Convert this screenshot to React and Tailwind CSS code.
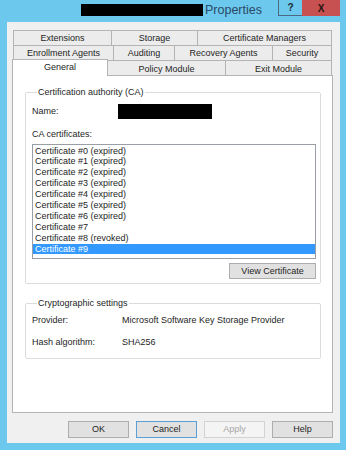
const tabRow1 = [
    { label: 'Extensions', w: 'w-[98px]' },
    { label: 'Storage', w: 'w-[86px]' },
    { label: 'Certificate Managers', w: 'flex-1' },
];

const tabRow2 = [
    { label: 'Enrollment Agents', w: 'w-[100px]' },
    { label: 'Auditing', w: 'w-[61px]' },
    { label: 'Recovery Agents', w: 'w-[98px]' },
    { label: 'Security', w: 'flex-1' },
];

const certificates = [
    'Certificate #0 (expired)',
    'Certificate #1 (expired)',
    'Certificate #2 (expired)',
    'Certificate #3 (expired)',
    'Certificate #4 (expired)',
    'Certificate #5 (expired)',
    'Certificate #6 (expired)',
    'Certificate #7',
    'Certificate #8 (revoked)',
    'Certificate #9',
];

const Tab = ({ label, w, last }) => (
    <div
        className={`${w} h-[15px] flex items-center justify-center bg-[#ececec] border-t border-l border-[#b4b4b4] ${last ? 'border-r' : ''}`}
    >
        {label}
    </div>
);

const Button = ({ children, variant }) => {
    // Cancel tiene el foco, Apply deshabilitado
    let style = 'bg-[#e1e1e1] border-[#adadad] text-[#1e1e1e]';
    if (variant === 'focus') style = 'bg-[#e1e1e1] border-[#5c9fd4] text-[#1e1e1e]';
    if (variant === 'disabled') style = 'bg-[#f4f4f4] border-[#d3d3d3] text-[#a6a6a6]';
    return (
        <div className={`w-[61px] h-[17px] flex items-center justify-center border ${style}`}>
            {children}
        </div>
    );
};

export default function App() {
    return (
        <div className="w-[346px] h-[450px] bg-[#6cc8ec] flex flex-col font-['Liberation_Sans',Arial,sans-serif] text-[9px] leading-[11px] text-[#1e1e1e]">
            {/* Barra de título */}
            <div className="h-[22px] flex items-start shrink-0">
                <div className="ml-[81px] mt-[4px] w-[122px] h-[12px] bg-black" />
                <span className="ml-[2px] text-[12.5px] leading-[20px] text-[#2a4868]">Properties</span>
                <div className="ml-auto mr-[6px] flex">
                    <div className="w-[24px] h-[16px] border-l border-b border-[#4a6a80] flex items-center justify-center text-[10px] font-bold text-[#1e2a33]">
                        ?
                    </div>
                    <div className="w-[38px] h-[16px] bg-[#c75050] flex items-center justify-center text-[10px] font-bold text-[#2a1414]">
                        X
                    </div>
                </div>
            </div>

            {/* Área de contenido */}
            <div className="flex-1 ml-[7px] mr-[6px] mb-[7px] bg-[#f0f0f0] flex flex-col pt-[8px] pl-[5px] pr-[7px]">
                <div className="px-[1px]">
                    <div className="flex">
                        {tabRow1.map((t, i) => (
                            <Tab key={t.label} {...t} last={i === tabRow1.length - 1} />
                        ))}
                    </div>
                    <div className="flex">
                        {tabRow2.map((t, i) => (
                            <Tab key={t.label} {...t} last={i === tabRow2.length - 1} />
                        ))}
                    </div>
                </div>
                <div className="flex items-end h-[15px]">
                    <div className="relative z-10 w-[96px] h-[17px] -mb-px bg-white border-t border-l border-r border-[#b4b4b4] flex justify-center pt-[2px]">
                        General
                    </div>
                    <div className="w-[117px] h-[15px] flex items-center justify-center bg-[#ececec] border-t border-[#b4b4b4] pt-[2px]">
                        Policy Module
                    </div>
                    <div className="w-[107px] h-[15px] flex items-center justify-center bg-[#ececec] border-t border-l border-r border-[#b4b4b4] pt-[2px]">
                        Exit Module
                    </div>
                </div>

                {/* Panel de la pestaña General */}
                <div className="h-[338px] bg-white border border-[#b4b4b4] flex flex-col pt-[11px] pl-[12px] pr-[11px]">
                    <fieldset className="border border-[#dcdcdc] rounded-[2px] pl-[6px] pr-[4px] pb-[4px] flex flex-col">
                        <legend className="ml-[5px] px-[1px]">Certification authority (CA)</legend>
                        <div className="flex items-center h-[15px] mt-[5.5px]">
                            <span className="w-[86px]">Name:</span>
                            <div className="w-[94px] h-[15px] bg-black" />
                        </div>
                        <div className="mt-[10px]">CA certificates:</div>
                        <div className="mt-[4.5px] h-[115px] border border-[#9a9ea6] pt-[0.5px]">
                            {certificates.map((c, i) => (
                                <div
                                    key={c}
                                    className={`h-[10.9px] leading-[10.9px] pl-[2px] ${i === certificates.length - 1 ? 'bg-[#3399ff] text-white' : ''}`}
                                >
                                    {c}
                                </div>
                            ))}
                        </div>
                        <div className="self-end mt-[4px] w-[87px] h-[16px] bg-[#e1e1e1] border border-[#adadad] flex items-center justify-center">
                            View Certificate
                        </div>
                    </fieldset>

                    <fieldset className="mt-[14px] border border-[#dcdcdc] rounded-[2px] pl-[6px] pr-[4px] pb-[10px] flex flex-col">
                        <legend className="ml-[5px] px-[1px]">Cryptographic settings</legend>
                        <div className="flex mt-[6px]">
                            <span className="w-[90px]">Provider:</span>
                            <span>Microsoft Software Key Storage Provider</span>
                        </div>
                        <div className="flex mt-[11px]">
                            <span className="w-[90px]">Hash algorithm:</span>
                            <span>SHA256</span>
                        </div>
                    </fieldset>
                </div>

                {/* Botones inferiores */}
                <div className="mt-[8px] flex justify-end gap-[7px]">
                    <Button>OK</Button>
                    <Button variant="focus">Cancel</Button>
                    <Button variant="disabled">Apply</Button>
                    <Button>Help</Button>
                </div>
            </div>
        </div>
    );
}
